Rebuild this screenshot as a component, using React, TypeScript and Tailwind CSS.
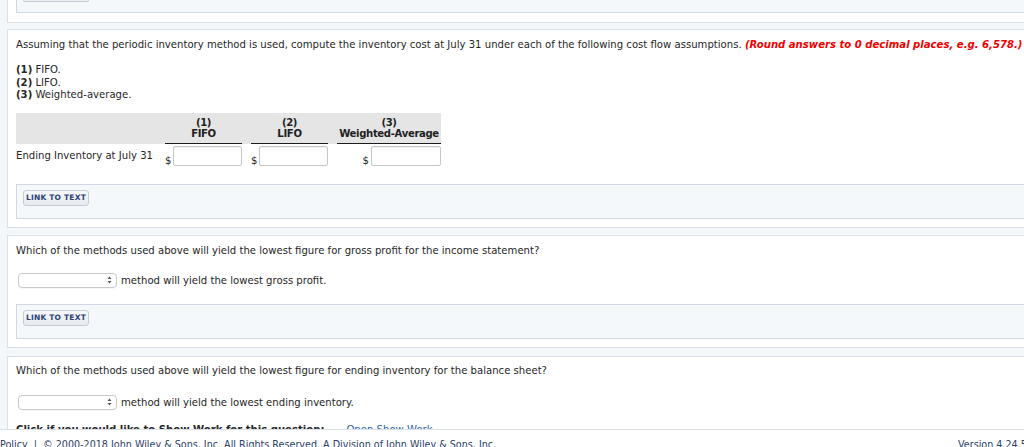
const LinkButton = () => (
  <div className="flex h-[16px] w-[66px] items-center justify-center rounded-[3px] border border-[#c5ccd6] bg-gradient-to-b from-[#f7f9fb] to-[#e6eaf0] text-[7.5px] font-bold tracking-[0.2px] text-[#2b4373]">
    LINK TO TEXT
  </div>
);

const LinkBox = () => (
  <div className="h-[35px] border border-[#cfd8e3] bg-[#f5f8fb] pl-[6px] pt-[5px]">
    <LinkButton />
  </div>
);

const FakeSelect = () => (
  <div className="flex h-[15px] w-[99px] items-center justify-end rounded-[4px] border border-[#c9c9c9] bg-white pr-[4px] shadow-[0_1px_0_rgba(0,0,0,0.03)]">
    <svg width="5" height="8" viewBox="0 0 5 8">
      <path d="M2.5 0.5 L4.5 3 L0.5 3 Z" fill="#555" />
      <path d="M2.5 7.5 L4.5 5 L0.5 5 Z" fill="#555" />
    </svg>
  </div>
);

const Dollar = () => <span className="mr-[2px] leading-[10px]">$</span>;

const MoneyInput = () => (
  <div className="h-[20px] w-[70px] rounded-[2px] border border-[#c6c6c6] bg-white shadow-[inset_0_1px_1px_rgba(0,0,0,0.06)]" />
);

const columns = [
  { num: "(1)", name: "FIFO" },
  { num: "(2)", name: "LIFO" },
  { num: "(3)", name: "Weighted-Average" },
];

export default function App() {
  return (
    <div className="relative h-[447px] w-[1024px] overflow-hidden bg-[#f4f7fa] font-['DejaVu_Sans',Verdana,sans-serif] text-[10.1px] text-[#262626]">
      <div className="w-[1060px] pl-[7px]">
        {/* previous question tail */}
        <div className="h-[23px] border-x border-b border-[#d9e0e8] bg-white px-[8px]">
          <div className="h-[13px] border-x border-b border-[#cfd8e3] bg-[#f5f8fb] pl-[6px]">
            <div className="h-[2px] w-[66px] rounded-b-[3px] border-x border-b border-[#c5ccd6] bg-[#eaeef3]" />
          </div>
        </div>

        {/* part a */}
        <div className="mt-[6px] border border-[#d9e0e8] bg-white px-[8px] pb-[8px] pt-[8px]">
          <p className="whitespace-nowrap leading-[14px]">
            Assuming that the periodic inventory method is used, compute the inventory cost at July 31 under each of the following cost flow assumptions.{" "}
            <span className="font-bold italic text-[#f00000]">(Round answers to 0 decimal places, e.g. 6,578.)</span>
          </p>
          <div className="mt-[12px] leading-[12.5px]">
            <div><span className="font-bold">(1)</span> FIFO.</div>
            <div><span className="font-bold">(2)</span> LIFO.</div>
            <div><span className="font-bold">(3)</span> Weighted-average.</div>
          </div>

          <div className="mt-[11px] w-[425px]">
            <div className="grid h-[31px] grid-cols-[140px_77px_77px_104px] gap-x-[9px] bg-[#e5e5e5]">
              <div />
              {columns.map((c) => (
                <div key={c.num} className="whitespace-nowrap border-b border-[#1c1c1c] pt-[4px] text-center font-bold leading-[11px] tracking-[-0.35px] text-[#1f1f1f]">
                  <div>{c.num}</div>
                  <div>{c.name}</div>
                </div>
              ))}
            </div>
            <div className="mt-[2px] grid h-[20px] grid-cols-[140px_77px_77px_104px] gap-x-[9px]">
              <div className="flex items-center whitespace-nowrap">Ending Inventory at July 31</div>
              <div className="flex items-end justify-end">
                <Dollar />
                <MoneyInput />
              </div>
              <div className="flex items-end justify-end">
                <Dollar />
                <MoneyInput />
              </div>
              <div className="flex items-end justify-end">
                <Dollar />
                <MoneyInput />
              </div>
            </div>
          </div>

          <div className="mt-[18px]">
            <LinkBox />
          </div>
        </div>

        {/* part b */}
        <div className="mt-[7px] border border-[#d9e0e8] bg-white px-[8px] pb-[8px] pt-[8px]">
          <p className="leading-[14px]">
            Which of the methods used above will yield the lowest figure for gross profit for the income statement?
          </p>
          <div className="mt-[15px] flex items-end gap-[4px] pl-[2px] leading-[14px]">
            <FakeSelect />
            <span>method will yield the lowest gross profit.</span>
          </div>
          <div className="mt-[16px]">
            <LinkBox />
          </div>
        </div>

        {/* part c */}
        <div className="mt-[8px] border border-[#d9e0e8] bg-white px-[8px] pb-[8px] pt-[7px]">
          <p className="leading-[14px]">
            Which of the methods used above will yield the lowest figure for ending inventory for the balance sheet?
          </p>
          <div className="mt-[17px] flex items-end gap-[4px] pl-[2px] leading-[14px]">
            <FakeSelect />
            <span>method will yield the lowest ending inventory.</span>
          </div>
          <div className="mt-[13px] flex gap-[22px] leading-[14px]">
            <span className="font-bold">Click if you would like to Show Work for this question:</span>
            <span className="text-[#2f5fa6]">Open Show Work</span>
          </div>
          <div className="h-[40px]" />
        </div>
      </div>

      {/* footer overlays the scrolling content */}
      <div className="absolute bottom-0 left-0 grid h-[18px] w-[1060px] grid-cols-[958px_auto] border-t border-[#d9e0e8] bg-white pt-[8px] text-[9.6px] leading-[14px] text-[#2c4068]">
        <span className="whitespace-nowrap">Policy &nbsp;|&nbsp; © 2000-2018 John Wiley &amp; Sons, Inc. All Rights Reserved. A Division of John Wiley &amp; Sons, Inc.</span>
        <span className="whitespace-nowrap">Version 4.24.5</span>
      </div>
    </div>
  );
}
